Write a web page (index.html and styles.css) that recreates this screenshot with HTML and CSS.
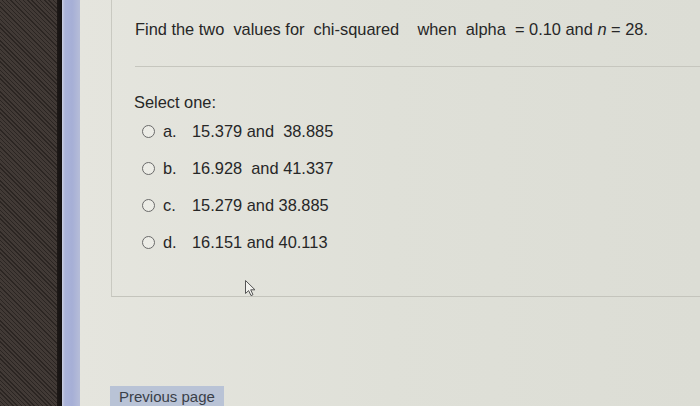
FILE: index.html
```html
<!DOCTYPE html>
<html>
<head>
<meta charset="utf-8">
<link rel="stylesheet" href="styles.css">
</head>
<body>
<div class="screen">
  <div class="bezel"></div>
  <div class="bezel-edge"></div>
  <div class="sidebar"></div>
  <main class="main">
    <section class="card">
      <h1 class="question">Find the two&nbsp; values for&nbsp; chi-squared &nbsp;&nbsp; when&nbsp; alpha &nbsp;= 0.10 and <i>n</i> = 28.</h1>
      <div class="select">Select one:</div>
      <div class="options">
        <div class="option"><span class="radio"></span><span class="letter">a.</span><span class="value">15.379 and&nbsp; 38.885</span></div>
        <div class="option"><span class="radio"></span><span class="letter">b.</span><span class="value">16.928&nbsp; and 41.337</span></div>
        <div class="option"><span class="radio"></span><span class="letter">c.</span><span class="value">15.279 and 38.885</span></div>
        <div class="option"><span class="radio"></span><span class="letter">d.</span><span class="value">16.151 and 40.113</span></div>
      </div>
      <svg class="cursor" width="14" height="18" viewBox="0 0 14 18">
        <path d="M1.5 1.5 L1.5 14.5 L4.6 11.6 L7 16.6 L9 15.7 L6.7 10.8 L11 10.8 Z" fill="#f2f2ee" stroke="#555" stroke-width="1" stroke-linejoin="round"/>
      </svg>
    </section>
    <div class="nav">
      <button class="prev">Previous page</button>
    </div>
  </main>
</div>
</body>
</html>
```
FILE: styles.css
```css
html, body {
  margin: 0;
  padding: 0;
  width: 700px;
  height: 406px;
  overflow: hidden;
}
.screen {
  display: flex;
  height: 406px;
  font-family: "Liberation Sans", Arial, sans-serif;
  color: #272727;
}
.bezel {
  width: 57px;
  flex: none;
  background-color: #3a322e;
  background-image: repeating-linear-gradient(45deg, rgba(0,0,0,0.25) 0 1px, rgba(255,255,255,0.04) 1px 3px);
}
.bezel-edge {
  width: 5px;
  flex: none;
  background: linear-gradient(90deg, #1d1816, #121010);
}
.sidebar {
  width: 18px;
  flex: none;
  background: linear-gradient(90deg, #c9cde0 0, #aab3d8 3px, #a6afd6 10px, #b6bdd8 18px);
}
.main {
  flex: 1;
  display: flex;
  flex-direction: column;
  padding-left: 31px;
  background: linear-gradient(90deg, #e5e5de 0%, #dfe0d8 50%, #dcddd5 100%);
}
.card {
  position: relative;
  border-left: 1px solid #c9c9c1;
  border-bottom: 1px solid #c4c4bc;
  padding-bottom: 35px;
}
.question {
  margin: 0 0 0 23px;
  padding: 19px 0 27px;
  font-size: 16.4px;
  line-height: 20px;
  font-weight: normal;
  border-bottom: 1px solid #c6c6be;
  white-space: nowrap;
}
.question i {
  font-style: italic;
}
.select {
  margin: 25px 0 0 22px;
  font-size: 16.4px;
  line-height: 20px;
}
.options {
  display: flex;
  flex-direction: column;
  padding: 1px 0 0 30px;
}
.option {
  display: flex;
  align-items: center;
  height: 37px;
  font-size: 16.4px;
}
.radio {
  width: 11px;
  height: 11px;
  border: 1.5px solid #6a6a6a;
  border-radius: 50%;
  background: #ecece6;
  flex: none;
}
.letter {
  margin-left: 8px;
  width: 29px;
}
.cursor {
  position: absolute;
  left: 132px;
  top: 279px;
}
.nav {
  flex: 1;
  display: flex;
  align-items: flex-end;
}
.prev {
  margin: 0 0 0 -1px;
  height: 20px;
  padding: 2px 9px 0;
  border: none;
  background: #b9c3d6;
  font-family: "Liberation Sans", Arial, sans-serif;
  font-size: 15px;
  line-height: 18px;
  color: #3a3f48;
}
```
